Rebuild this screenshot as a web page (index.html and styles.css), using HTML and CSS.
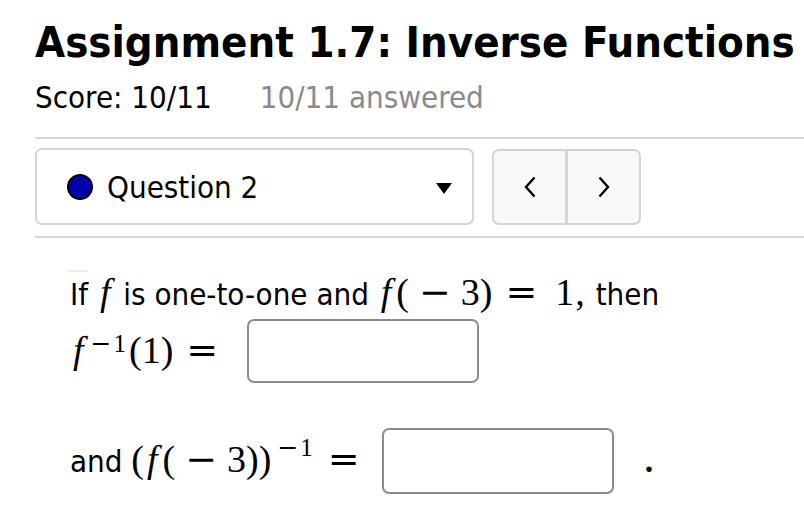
FILE: index.html
```html
<!DOCTYPE html>
<html lang="en">
<head>
<meta charset="utf-8">
<title>Assignment 1.7: Inverse Functions</title>
<link rel="stylesheet" href="styles.css">
</head>
<body>
<div class="page">
  <h1 class="title">Assignment 1.7: Inverse Functions</h1>
  <div class="score"><span>Score: 10/11</span><span class="answered">10/11 answered</span></div>
  <div class="rule rule-top"></div>
  <div class="nav">
    <div class="select">
      <span class="dot"></span>
      <span class="qlabel">Question 2</span>
      <span class="caret"></span>
    </div>
    <div class="pager">
      <button class="pbtn" aria-label="Previous question"><svg width="12" height="22" viewBox="0 0 12 22"><polyline points="10.5,1.5 2,11 10.5,20.5" fill="none" stroke="#000" stroke-width="2.4"/></svg></button>
      <span class="pdiv"></span>
      <button class="pbtn" aria-label="Next question"><svg width="12" height="22" viewBox="0 0 12 22"><polyline points="1.5,1.5 10,11 1.5,20.5" fill="none" stroke="#000" stroke-width="2.4"/></svg></button>
    </div>
  </div>
  <div class="rule"></div>
  <div class="question">
    <div class="mark"></div>
    <p class="line1">If <span class="math"><i class="mi">f</i></span> is one-to-one and <span class="math"><i class="mi">f</i><span class="lp">(</span><span class="mo">−</span>3)<span class="rel">=</span>1<span class="comma">,</span></span> then</p>
    <div class="row row2">
      <span class="lead"><span class="math"><i class="mi">f</i><sup class="sup sup2"><span class="smo">−</span>1</sup><span class="lp">(</span>1)<span class="rel">=</span></span></span>
      <span class="input"></span>
    </div>
    <div class="row row3">
      <span class="lead">and <span class="math">(<i class="mi">f</i><span class="lp">(</span><span class="mo">−</span>3))<sup class="sup sup3"><span class="smo">−</span>1</sup><span class="rel">=</span></span></span>
      <span class="input"></span>
      <span class="period">.</span>
    </div>
  </div>
</div>
</body>
</html>
```
FILE: styles.css
```css
* { box-sizing: border-box; }
html, body { margin: 0; padding: 0; background: #fff; }
body { font-family: "DejaVu Sans Condensed", "DejaVu Sans", sans-serif; color: #000; }
.page { padding-left: 35px; }
.title {
  margin: 0;
  padding-top: 16px;
  font-size: 43.3px;
  font-weight: bold;
  line-height: 52px;
  white-space: nowrap;
}
.score {
  display: flex;
  gap: 48px;
  font-size: 31px;
  line-height: 36px;
  margin-top: 11px;
}
.answered { color: #8a8a8a; }
.rule { height: 2px; background: #d6d6d6; }
.rule-top { margin-top: 22px; }
.nav {
  display: flex;
  align-items: center;
  gap: 18px;
  padding: 9px 0 11px;
}
.select {
  width: 439px;
  height: 77px;
  border: 2px solid #d4d4d4;
  border-radius: 7px;
  display: flex;
  align-items: center;
  padding-left: 30px;
  padding-right: 20px;
}
.dot {
  width: 26px;
  height: 26px;
  border-radius: 50%;
  background: #0000aa;
  border: 2.5px solid #000;
  flex: none;
}
.qlabel { font-size: 31px; margin-left: 14px; flex: 1; line-height: 36px; }
.caret {
  width: 0; height: 0;
  border-left: 8px solid transparent;
  border-right: 8px solid transparent;
  border-top: 11px solid #000;
  margin-top: 4px;
}
.pager {
  width: 149px;
  height: 76px;
  border: 2px solid #d4d4d4;
  border-radius: 7px;
  background: #f8f8f8;
  display: flex;
  align-items: stretch;
}
.pbtn {
  flex: 1;
  border: 0;
  background: transparent;
  padding: 0;
  display: flex;
  align-items: center;
  justify-content: center;
}
.pdiv { width: 3px; background: #d4d4d4; }
.question {
  padding-left: 35px;
  padding-top: 32px;
  font-size: 31px;
}
.mark { width: 20px; height: 2px; background: #ececec; margin-left: -3px; }
.line1 { margin: 0; line-height: 44px; white-space: nowrap; }
.math { font-family: "Liberation Serif", "DejaVu Serif", serif; font-size: 38px; line-height: 1; }
.mi { font-style: italic; margin-left: 3px; margin-right: 4px; }
.lp { margin-left: 1px; }
.comma { margin-left: 1px; margin-right: 2px; }
.mo, .rel, .smo { font-family: "DejaVu Serif", serif; }
.mo { margin: 0 10px; }
.rel { margin: 0 18px 0 13px; }
.sup { font-size: 25px; line-height: 0; margin-left: 3px; margin-right: 2px; }
.sup2 { vertical-align: 11px; }
.sup3 { vertical-align: 16px; margin-left: 6px; }
.smo { margin-right: 2px; }
.row { display: flex; align-items: center; white-space: nowrap; }
.lead { line-height: 1; }
.row2 { margin-top: 3px; }
.row2 .lead { margin-bottom: 2px; }
.row3 { margin-top: 45px; }
.row3 .lead { margin-bottom: 4px; }
.input {
  display: block;
  width: 232px;
  height: 64px;
  border: 2px solid #8c8c8c;
  border-radius: 7px;
  background: #fff;
  flex: none;
}
.row2 .input { margin-left: 11px; }
.row3 .input { height: 66px; margin-left: 4px; }
.period { margin-left: 31px; font-family: "Liberation Serif", serif; font-size: 34px; font-weight: bold; line-height: 1; }
```
